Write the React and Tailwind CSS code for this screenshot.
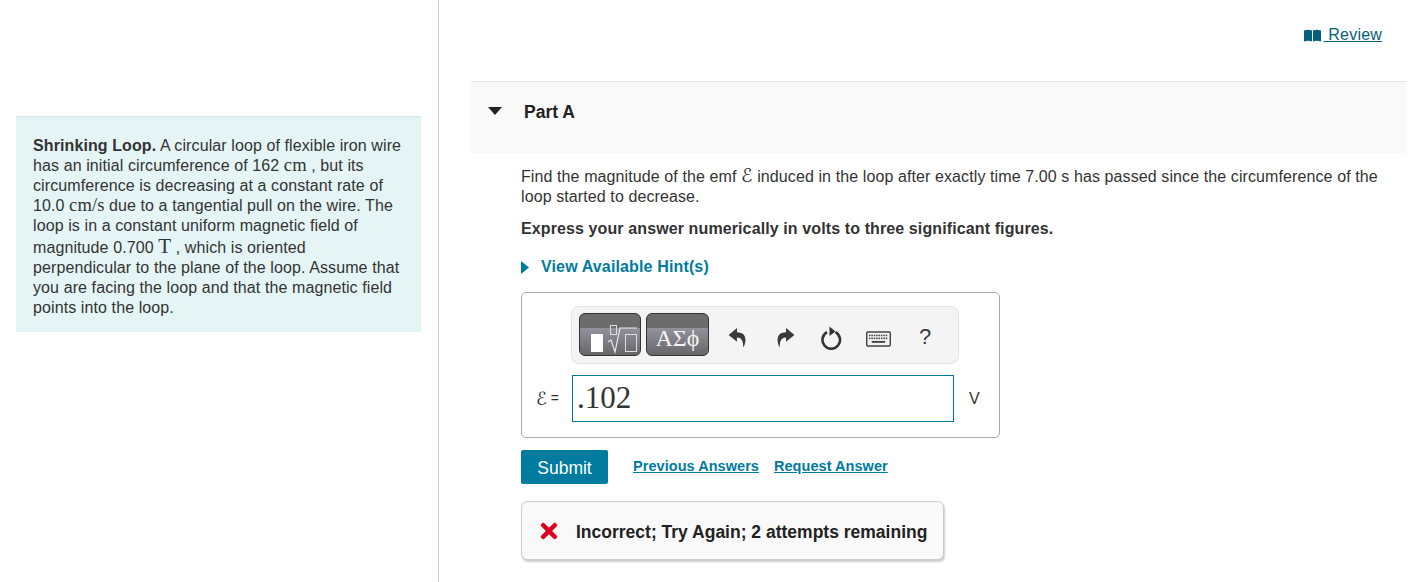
import React from "react";
import { FaTimes } from "react-icons/fa";

const Unit = ({ children, big }) => (
  <span className={`font-['Liberation_Serif',serif] leading-none ${big ? "text-[21px]" : "text-[18.5px]"}`}>{children}</span>
);

const ScriptE = ({ className }) => <span className={`font-['DejaVu_Sans',serif] leading-none text-[#333] ${className}`}>ℰ</span>;

function BookIcon() {
  return (
    <svg width="17" height="13" viewBox="0 0 17 13" className="mr-[3px]">
      <path d="M0 1.5C3 .5 6 .5 8 1.5V12.5C6 11.5 3 11.5 0 12.5Z" fill="#05607c" />
      <path d="M17 1.5C14 .5 11 .5 9 1.5V12.5C11 11.5 14 11.5 17 12.5Z" fill="#05607c" />
    </svg>
  );
}

function KeyboardIcon() {
  const keys = [];
  for (let i = 0; i < 8; i++) keys.push(<rect key={i} x={3 + i * 2.5} y="3.5" width="1.6" height="1.6" fill="#444" />);
  for (let i = 0; i < 8; i++) keys.push(<rect key={"b" + i} x={3 + i * 2.5} y="6.5" width="1.6" height="1.6" fill="#444" />);
  return (
    <svg width="25" height="16" viewBox="0 0 26 16">
      <rect x="0.75" y="0.75" width="24.5" height="14.5" rx="1" fill="#f4f4f4" stroke="#444" strokeWidth="1.5" />
      {keys}
      <rect x="6" y="10" width="14" height="2" fill="#444" />
    </svg>
  );
}

function UndoIcon({ flip, className }) {
  return (
    <svg width="19" height="21" viewBox="0 0 18 20" className={`${flip ? "-scale-x-100" : ""} ${className}`}>
      <path d="M8.5 1L0.5 7.5L8.5 14V10C12.5 10 14.5 12.5 14.5 19.5C17.5 14.5 18.5 5 8.5 5Z" fill="#3a3a3a" />
    </svg>
  );
}

function RefreshIcon({ className }) {
  return (
    <svg width="22" height="24" viewBox="0 0 22 24" className={className}>
      <path d="M7 6.2A8.8 8.8 0 1 0 15.5 6.2" fill="none" stroke="#333" strokeWidth="2.6" />
      <path d="M9.5 0.5L15.5 5.5L9.5 10Z" fill="#333" />
    </svg>
  );
}

function MathButton({ className, children }) {
  return (
    <div className={`relative -mt-[2px] h-[43px] rounded-[6px] border border-[#333] overflow-hidden bg-[linear-gradient(#6c6c6c_0,#6c6c6c_33%,#94939c_33%,#66666a_100%)] ${className}`}>
      {children}
    </div>
  );
}

export default function App() {
  return (
    <div className="flex h-[582px] w-[1412px] overflow-hidden bg-white font-['Liberation_Sans',sans-serif] text-[#333]">
      {/* left column */}
      <div className="w-[439px] shrink-0 border-r border-[#c5d3dc] pl-4 pr-[17px] pt-[116px]">
        <div className="h-[216px] border-t border-[#dbe5e8] bg-[#e5f5f6] pl-[17px] pr-[18px] pt-[19px] text-[16px] leading-[20px] tracking-[0.1px]">
          <b>Shrinking Loop.</b> A circular loop of flexible iron wire has an initial circumference of 162 <Unit>cm</Unit> , but its circumference is decreasing at a constant rate of 10.0 <Unit>cm/s</Unit> due to a tangential pull on the wire. The loop is in a constant uniform magnetic field of magnitude 0.700 <Unit big>T</Unit> , which is oriented perpendicular to the plane of the loop. Assume that you are facing the loop and that the magnetic field points into the loop.
        </div>
      </div>

      {/* right column */}
      <div className="w-[967px] pl-8">
        <div className="flex h-[81px] items-start justify-end pr-[24px] pt-[25px]">
          <a className="flex items-center text-[16px] leading-5 tracking-[0.2px] text-[#05607c] underline">
            <BookIcon />
            <span className="whitespace-pre"> Review</span>
          </a>
        </div>

        <div className="flex h-[72px] w-[935px] items-start border-t border-[#e3e3e3] bg-[#f9f9f9] pt-[20px]">
          <svg width="14" height="8" viewBox="0 0 14 8" className="ml-[17px] mt-[5px]">
            <path d="M0 0H14L7 8Z" fill="#222" />
          </svg>
          <span className="ml-[22px] text-[17.5px] font-bold leading-5 text-[#222]">Part A</span>
        </div>

        <div className="pl-[50px]">
          <p className="mt-[13px] w-[870px] text-[16px] leading-[20px] tracking-[0.1px]">
            Find the magnitude of the emf <ScriptE className="text-[19px]" /> induced in the loop after exactly time 7.00 s has passed since the circumference of the loop started to decrease.
          </p>
          <p className="mt-[12px] text-[16px] font-bold leading-5 tracking-[0.11px]">Express your answer numerically in volts to three significant figures.</p>
          <div className="mt-[18px] flex items-center text-[16px] font-bold leading-5 tracking-[0.14px] text-[#007ba0]">
            <svg width="8" height="13" viewBox="0 0 8 13"><path d="M0 0L8 6.5L0 13Z" fill="#007ba0" /></svg>
            <span className="ml-3">View Available Hint(s)</span>
          </div>

          <div className="mt-[15px] h-[146px] w-[479px] rounded-[5px] border border-[#aaa] pl-[49px] pt-[13px]">
            <div className="flex h-[58px] w-[388px] items-center rounded-[8px] border border-[#e3e3e3] bg-[#f4f4f4] pl-[7px]">
              <MathButton className="w-[62px]">
                <div className="absolute left-[11px] top-[20px] h-[18px] w-[12px] bg-white" />
                <svg width="60" height="41" viewBox="0 0 60 41" className="absolute left-0 top-0">
                  <path d="M28 28L31 26L35 38L40 14H57" fill="none" stroke="#e8e8e8" strokeWidth="1.2" />
                </svg>
                <div className="absolute left-[30px] top-[11px] h-[10px] w-[7px] border border-[#ddd]" />
                <div className="absolute left-[45px] top-[20px] h-[18px] w-[12px] border border-[#ddd]" />
              </MathButton>
              <MathButton className="ml-[5px] flex w-[63px] items-center justify-center pt-[7px]">
                <span className="font-['Liberation_Serif',serif] text-[24px] leading-6 text-[#f4f4f4]">ΑΣϕ</span>
              </MathButton>
              <UndoIcon className="ml-[19px] mt-[4px]" />
              <UndoIcon flip className="ml-[29px] mt-[4px]" />
              <RefreshIcon className="ml-[25px] mt-[6px]" />
              <div className="ml-[24px] mt-[7px]"><KeyboardIcon /></div>
              <span className="ml-[28px] mt-[3px] text-[22px] leading-6 text-[#3a3a3a]">?</span>
            </div>

            <div className="mt-[11px] flex items-center">
              <div className="-ml-[35px] flex w-[35px] items-center whitespace-pre text-[14px]"><ScriptE className="text-[18px]" /> =</div>
              <div className="ml-px h-[47px] w-[382px] border border-[#007ba0] pl-[4px] font-['Liberation_Serif',serif] text-[31px] leading-[43px]">.102</div>
              <span className="ml-[15px] text-[16px]">V</span>
            </div>
          </div>

          <div className="mt-3 flex items-center">
            <button className="h-[34px] w-[87px] rounded-[2px] bg-[#007ba0] pt-[2px] text-[17.5px] text-white">Submit</button>
            <a className="ml-[25px] -mt-[1px] text-[14.5px] font-bold tracking-[0.05px] text-[#007ba0] underline">Previous Answers</a>
            <a className="ml-[15px] -mt-[1px] text-[14.5px] font-bold tracking-[0.05px] text-[#007ba0] underline">Request Answer</a>
          </div>

          <div className="mt-[17px] flex h-[59px] w-[423px] items-center rounded-[6px] border border-[#ccc] bg-[#f9f9f9] pl-[15px] shadow-[1px_2px_2px_rgba(0,0,0,0.2)]">
            <FaTimes className="h-[24px] w-[24px] text-[#db0020]" />
            <span className="ml-[15px] whitespace-nowrap pt-[3px] text-[17.5px] font-bold text-[#222]">Incorrect; Try Again; 2 attempts remaining</span>
          </div>
        </div>
      </div>
    </div>
  );
}
